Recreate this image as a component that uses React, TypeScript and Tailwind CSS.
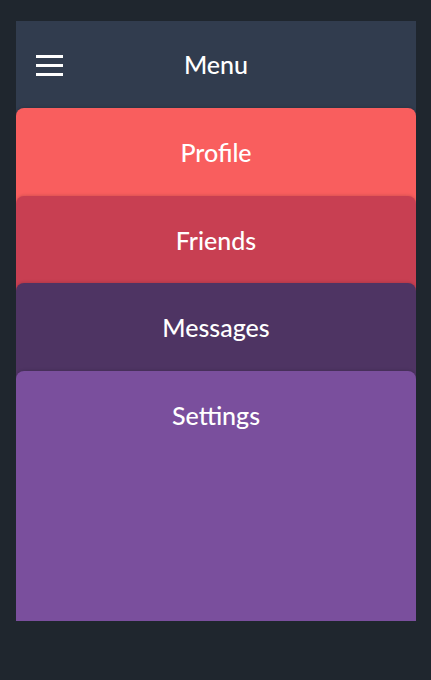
const items = [
  { label: "Profile", color: "bg-[#f95e5e]", size: "h-[96px]" },
  { label: "Friends", color: "bg-[#c83f52]", size: "h-[95px] -mt-2" },
  { label: "Messages", color: "bg-[#4e3463]", size: "h-[96px] -mt-2" },
  { label: "Settings", color: "bg-[#7a4f9d]", size: "flex-1 -mt-2" },
];

export default function App() {
  return (
    <div
      className="min-h-[680px] bg-[#1f262e] pt-[21px] px-4"
      style={{ fontFamily: "Lato, 'Open Sans', sans-serif" }}
    >
      <div className="flex h-[600px] w-[400px] flex-col overflow-hidden bg-[#313c4e]">
        <header className="relative flex h-[87px] shrink-0 items-center justify-center text-white">
          <button className="absolute left-5 top-[34px] flex w-[27px] flex-col gap-[6px]">
            <span className="block h-[3px] w-full bg-white" />
            <span className="block h-[3px] w-full bg-white" />
            <span className="block h-[3px] w-full bg-white" />
          </button>
          <h1 className="text-[25px] font-medium leading-none">Menu</h1>
        </header>
        {items.map((item) => (
          <div
            key={item.label}
            className={`${item.color} ${item.size} rounded-t-lg pt-[32px] text-center text-[25px] font-medium leading-none text-white shadow-[0_-1px_3px_rgba(0,0,0,0.12)]`}
          >
            {item.label}
          </div>
        ))}
      </div>
    </div>
  );
}
